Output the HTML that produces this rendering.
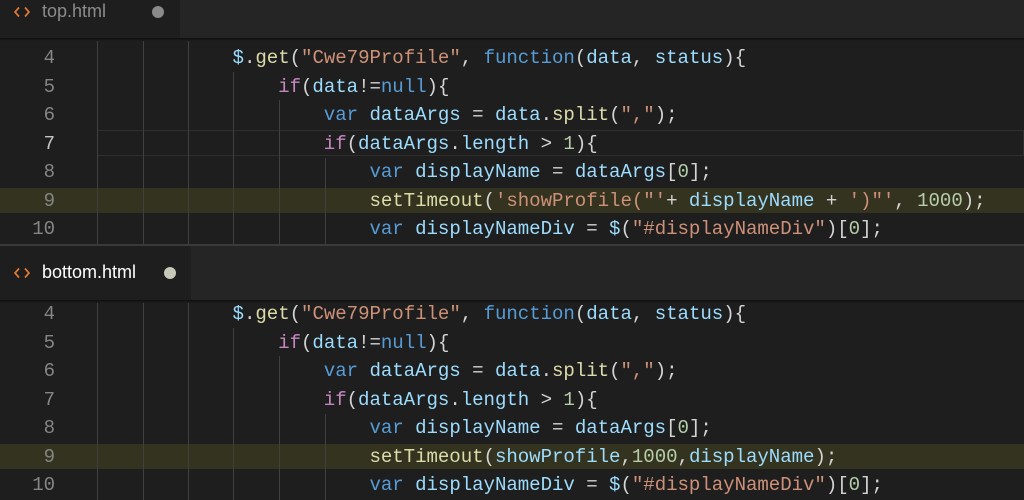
<!DOCTYPE html>
<html><head><meta charset="utf-8"><style>
*{margin:0;padding:0;box-sizing:border-box}
body{width:1024px;height:500px;background:#1e1e1e;overflow:hidden;position:relative;font-family:"Liberation Mono",monospace}
.bar{position:absolute;left:0;width:1024px;background:#252526}
.tab{position:absolute;left:0;top:0;height:100%;background:#1e1e1e;font-family:"Liberation Sans",sans-serif;font-size:18px}
.tab svg{position:absolute;left:14px}
.tab .nm{position:absolute;left:42px}
.tab .dot{position:absolute;width:12px;height:12px;border-radius:6px}
.ln{position:absolute;left:0;width:55px;text-align:right;color:#858585;font-size:19px;line-height:28px;height:28px}
.cd{position:absolute;left:50px;white-space:pre;color:#d4d4d4;font-size:19.1px;line-height:28px;height:28px;letter-spacing:-0.05px}
.g{position:absolute;width:1px;background:#404040}
.hl{position:absolute;left:0;width:1024px;height:25px;background:#34331f}
.cur{position:absolute;left:97px;width:927px;height:26px;border:1px solid #2f2f2f}
.k{color:#569cd6}.p{color:#c586c0}.v{color:#9cdcfe}.f{color:#dcdcaa}.s{color:#ce9178}.n{color:#b5cea8}
</style></head><body>
<div class="bar" style="top:0;height:38px"><div class="tab" style="width:180px;background:#1e1e1e"><svg style="top:6px" width="16" height="12" viewBox="0 0 16 12"><path d="M5 1.5L1 6l4 4.5M11 1.5L15 6l-4 4.5" fill="none" stroke="#e37933" stroke-width="1.7"/></svg><span class="nm" style="top:1px;color:#8b8b8b">top.html</span><span class="dot" style="left:152px;top:6px;background:#8a8a8a"></span></div></div>
<div style="position:absolute;top:38px;left:0;width:1024px;height:3px;background:linear-gradient(#0e0e0e,#1e1e1e)"></div>

<div class="hl" style="top:188px"></div>
<div class="cur" style="top:130px"></div>
<div class="g" style="left:97px;top:41px;height:203px"></div>
<div class="g" style="left:143px;top:41px;height:203px"></div>
<div class="g" style="left:188px;top:41px;height:203px"></div>
<div class="g" style="left:233px;top:72px;height:172px"></div>
<div class="g" style="left:279px;top:100px;height:144px"></div>
<div class="g" style="left:325px;top:158px;height:86px"></div>

<div class="ln" style="top:44px">4</div>
<div class="ln" style="top:72.5px">5</div>
<div class="ln" style="top:101px">6</div>
<div class="ln" style="top:129.5px;color:#c6c6c6">7</div>
<div class="ln" style="top:158px">8</div>
<div class="ln" style="top:186.5px">9</div>
<div class="ln" style="top:215px">10</div>
<div class="cd" style="top:44px">                <span class="v">$</span>.<span class="f">get</span>(<span class="s">"Cwe79Profile"</span>, <span class="k">function</span>(<span class="v">data</span>, <span class="v">status</span>){</div>
<div class="cd" style="top:72.5px">                    <span class="p">if</span>(<span class="v">data</span>!=<span class="k">null</span>){</div>
<div class="cd" style="top:101px">                        <span class="k">var</span> <span class="v">dataArgs</span> = <span class="v">data</span>.<span class="f">split</span>(<span class="s">","</span>);</div>
<div class="cd" style="top:129.5px">                        <span class="p">if</span>(<span class="v">dataArgs</span>.<span class="v">length</span> &gt; <span class="n">1</span>){</div>
<div class="cd" style="top:158px">                            <span class="k">var</span> <span class="v">displayName</span> = <span class="v">dataArgs</span>[<span class="n">0</span>];</div>
<div class="cd" style="top:186.5px">                            <span class="f">setTimeout</span>(<span class="s">'showProfile("'</span>+ <span class="v">displayName</span> + <span class="s">')"'</span>, <span class="n">1000</span>);</div>
<div class="cd" style="top:215px">                            <span class="k">var</span> <span class="v">displayNameDiv</span> = <span class="v">$</span>(<span class="s">"#displayNameDiv"</span>)[<span class="n">0</span>];</div>

<div style="position:absolute;top:244px;left:0;width:1024px;height:2px;background:#3a3a3a"></div>
<div class="bar" style="top:246px;height:54px"><div class="tab" style="width:191px;background:#1e1e1e"><svg style="top:21px" width="16" height="12" viewBox="0 0 16 12"><path d="M5 1.5L1 6l4 4.5M11 1.5L15 6l-4 4.5" fill="none" stroke="#e37933" stroke-width="1.7"/></svg><span class="nm" style="top:16px;color:#ffffff">bottom.html</span><span class="dot" style="left:164px;top:21px;background:#c8c8b8"></span></div></div>
<div style="position:absolute;top:300px;left:0;width:1024px;height:3px;background:linear-gradient(#0e0e0e,#1e1e1e)"></div>

<div class="hl" style="top:444px"></div>
<div class="g" style="left:97px;top:303px;height:197px"></div>
<div class="g" style="left:143px;top:303px;height:197px"></div>
<div class="g" style="left:188px;top:303px;height:197px"></div>
<div class="g" style="left:233px;top:328px;height:172px"></div>
<div class="g" style="left:279px;top:356px;height:144px"></div>
<div class="g" style="left:325px;top:414px;height:86px"></div>

<div class="ln" style="top:300px">4</div>
<div class="ln" style="top:328.5px">5</div>
<div class="ln" style="top:357px">6</div>
<div class="ln" style="top:385.5px">7</div>
<div class="ln" style="top:414px">8</div>
<div class="ln" style="top:442.5px">9</div>
<div class="ln" style="top:471px">10</div>
<div class="cd" style="top:300px">                <span class="v">$</span>.<span class="f">get</span>(<span class="s">"Cwe79Profile"</span>, <span class="k">function</span>(<span class="v">data</span>, <span class="v">status</span>){</div>
<div class="cd" style="top:328.5px">                    <span class="p">if</span>(<span class="v">data</span>!=<span class="k">null</span>){</div>
<div class="cd" style="top:357px">                        <span class="k">var</span> <span class="v">dataArgs</span> = <span class="v">data</span>.<span class="f">split</span>(<span class="s">","</span>);</div>
<div class="cd" style="top:385.5px">                        <span class="p">if</span>(<span class="v">dataArgs</span>.<span class="v">length</span> &gt; <span class="n">1</span>){</div>
<div class="cd" style="top:414px">                            <span class="k">var</span> <span class="v">displayName</span> = <span class="v">dataArgs</span>[<span class="n">0</span>];</div>
<div class="cd" style="top:442.5px">                            <span class="f">setTimeout</span>(<span class="v">showProfile</span>,<span class="n">1000</span>,<span class="v">displayName</span>);</div>
<div class="cd" style="top:471px">                            <span class="k">var</span> <span class="v">displayNameDiv</span> = <span class="v">$</span>(<span class="s">"#displayNameDiv"</span>)[<span class="n">0</span>];</div>
</body></html>
